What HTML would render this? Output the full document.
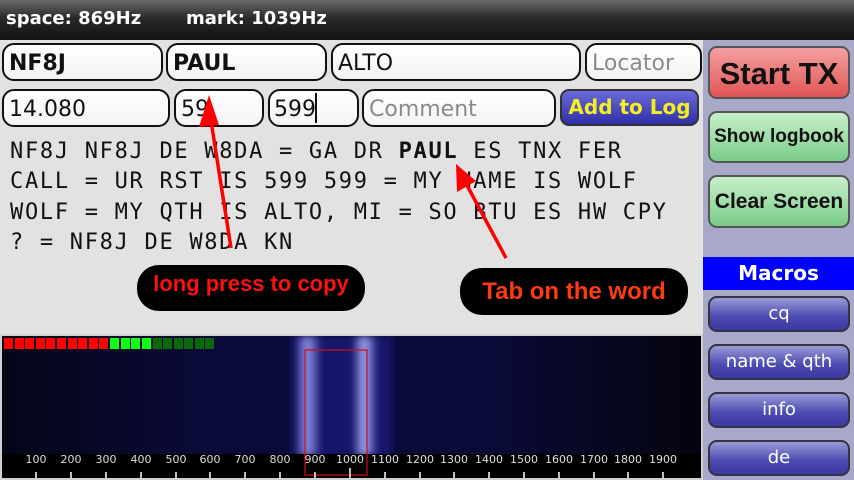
<!DOCTYPE html>
<html><head><meta charset="utf-8"><style>
*{margin:0;padding:0;box-sizing:border-box}
body{width:854px;height:480px;overflow:hidden;background:#e2e2e2;font-family:"DejaVu Sans","Liberation Sans",sans-serif;position:relative}
.abs{position:absolute}
.bar{left:0;top:0;width:854px;height:40px;background:linear-gradient(#6a6a6a,#2a2a2a 45%,#111)}
.bar span{position:absolute;top:8px;color:#fff;font-weight:bold;font-size:18px}
.fld{position:absolute;background:linear-gradient(#fff,#f4f4f4);border:2px solid #111;border-radius:12px;font-size:22px;padding-left:5px;line-height:37px;color:#111}
.gray{color:#8a8a8a}
.side{left:703px;top:40px;width:151px;height:440px;background:#a8a8c8}
.btn{position:absolute;left:708px;width:142px;border:2px solid #555;border-radius:9px;text-align:center;font-weight:bold;color:#111;white-space:nowrap;font-family:"Liberation Sans",sans-serif}
.mac{position:absolute;left:708px;width:142px;height:36px;border:2px solid #334;border-radius:9px;background:linear-gradient(#9a9ad8,#4a4ab0 60%,#3a3aa0);color:#fff;text-align:center;font-size:18px;line-height:31px}
.txt{position:absolute;left:10px;font-family:"DejaVu Sans Mono","Liberation Mono",monospace;font-size:22px;color:#111;white-space:pre;letter-spacing:1.7px}
.bub{position:absolute;background:#000;border-radius:22px;font-family:"Liberation Sans",sans-serif;font-weight:bold;text-align:center;white-space:nowrap}
</style></head><body>
<div class="abs bar"><span style="left:6px">space: 869Hz</span><span style="left:186px">mark: 1039Hz</span></div>
<div class="abs side"></div>
<div class="fld" style="left:2px;top:43px;width:161px;height:38px;font-weight:bold">NF8J</div>
<div class="fld" style="left:166px;top:43px;width:161px;height:38px;font-weight:bold">PAUL</div>
<div class="fld" style="left:331px;top:43px;width:250px;height:38px">ALTO</div>
<div class="fld gray" style="left:585px;top:43px;width:117px;height:38px">Locator</div>
<div class="fld" style="left:2px;top:89px;width:168px;height:38px">14.080</div>
<div class="fld" style="left:174px;top:89px;width:90px;height:38px">59</div>
<div class="fld" style="left:268px;top:89px;width:91px;height:38px;padding-left:4px">599<span style="position:absolute;left:45px;top:2px;width:2px;height:30px;background:#111"></span></div>
<div class="fld gray" style="left:362px;top:89px;width:194px;height:38px">Comment</div>
<div class="abs" style="left:560px;top:89px;width:139px;height:37px;border:2px solid #333;border-radius:9px;background:linear-gradient(#6a6ad8,#3030a8);color:#f4f020;font-weight:bold;font-size:20px;text-align:center;line-height:33px">Add to Log</div>

<div class="txt" style="top:139px">NF8J NF8J DE W8DA = GA DR <b>PAUL</b> ES TNX FER</div>
<div class="txt" style="top:169px">CALL = UR RST IS 599 599 = MY NAME IS WOLF</div>
<div class="txt" style="top:200px">WOLF = MY QTH IS ALTO, MI = SO BTU ES HW CPY</div>
<div class="txt" style="top:230px">? = NF8J DE W8DA KN</div>

<div class="bub" style="left:137px;top:265px;width:228px;height:46px;font-size:22px;line-height:38px;color:#ff1010">long press to copy</div>
<div class="bub" style="left:460px;top:268px;width:228px;height:47px;font-size:24px;line-height:47px;color:#ff3a10">Tab on the word</div>

<div class="abs" style="left:0;top:334px;width:703px;height:146px;background:#d0d0d0"></div>
<svg class="abs" style="left:2px;top:336px" width="699" height="142">
<defs><linearGradient id="w" x1="0" x2="1"><stop offset="0" stop-color="#050518"/><stop offset=".3" stop-color="#0a0a3a"/><stop offset=".7" stop-color="#0a0a38"/><stop offset="1" stop-color="#04040e"/></linearGradient>
<filter id="b"><feGaussianBlur stdDeviation="4"/></filter></defs>
<rect width="699" height="142" fill="url(#w)"/>
<g filter="url(#b)">
<rect x="290" y="0" width="100" height="120" fill="#16166a"/>
<rect x="297" y="0" width="18" height="120" fill="#5a5ac8" opacity=".8"/>
<rect x="302" y="0" width="7" height="120" fill="#a8a8f0" opacity=".7"/>
<rect x="354" y="0" width="18" height="120" fill="#5a5ac8" opacity=".8"/>
<rect x="359" y="0" width="7" height="120" fill="#b8b8f8" opacity=".8"/>
</g>
<rect x="0" y="118" width="699" height="24" fill="#000"/>
<g fill="#f00"><rect x="2" y="2" width="9" height="11"/><rect x="13" y="2" width="9" height="11"/><rect x="23" y="2" width="9" height="11"/><rect x="34" y="2" width="9" height="11"/><rect x="44" y="2" width="9" height="11"/><rect x="55" y="2" width="9" height="11"/><rect x="66" y="2" width="9" height="11"/><rect x="76" y="2" width="9" height="11"/><rect x="87" y="2" width="9" height="11"/><rect x="97" y="2" width="9" height="11"/></g>
<g fill="#1f1"><rect x="108" y="2" width="9" height="11"/><rect x="119" y="2" width="9" height="11"/><rect x="129" y="2" width="9" height="11"/><rect x="140" y="2" width="9" height="11"/></g>
<g fill="#0a6a0a"><rect x="151" y="2" width="9" height="11"/><rect x="161" y="2" width="9" height="11"/><rect x="172" y="2" width="9" height="11"/><rect x="182" y="2" width="9" height="11"/><rect x="193" y="2" width="9" height="11"/><rect x="203" y="2" width="9" height="11"/></g>
<rect x="303" y="14" width="62" height="125" fill="none" stroke="#d01010" stroke-width="1.2"/>
<g fill="#ddd" font-family="DejaVu Sans,sans-serif" font-size="11" text-anchor="middle">
<text x="34" y="127">100</text><text x="69" y="127">200</text><text x="104" y="127">300</text><text x="139" y="127">400</text><text x="174" y="127">500</text><text x="208" y="127">600</text><text x="243" y="127">700</text><text x="278" y="127">800</text><text x="313" y="127">900</text><text x="348" y="127">1000</text><text x="383" y="127">1100</text><text x="418" y="127">1200</text><text x="452" y="127">1300</text><text x="487" y="127">1400</text><text x="522" y="127">1500</text><text x="557" y="127">1600</text><text x="592" y="127">1700</text><text x="626" y="127">1800</text><text x="661" y="127">1900</text></g>
<g stroke="#fff" stroke-width="1.5"><line x1="34" y1="136" x2="34" y2="142"/><line x1="69" y1="136" x2="69" y2="142"/><line x1="104" y1="136" x2="104" y2="142"/><line x1="139" y1="136" x2="139" y2="142"/><line x1="174" y1="136" x2="174" y2="142"/><line x1="208" y1="136" x2="208" y2="142"/><line x1="243" y1="136" x2="243" y2="142"/><line x1="278" y1="136" x2="278" y2="142"/><line x1="313" y1="136" x2="313" y2="142"/><line x1="348" y1="132" x2="348" y2="142"/><line x1="383" y1="136" x2="383" y2="142"/><line x1="418" y1="136" x2="418" y2="142"/><line x1="452" y1="136" x2="452" y2="142"/><line x1="487" y1="136" x2="487" y2="142"/><line x1="522" y1="136" x2="522" y2="142"/><line x1="557" y1="136" x2="557" y2="142"/><line x1="592" y1="136" x2="592" y2="142"/><line x1="626" y1="136" x2="626" y2="142"/><line x1="661" y1="136" x2="661" y2="142"/></g>
</svg>

<svg class="abs" style="left:0;top:0" width="703" height="334">
<line x1="231" y1="248" x2="209" y2="108" stroke="#f00" stroke-width="3.5"/>
<polygon points="209,95 199,127 219,125" fill="#f00"/>
<line x1="506" y1="258" x2="462" y2="176" stroke="#f00" stroke-width="3.5"/>
<polygon points="456,164 457,192 476,181" fill="#f00"/>
</svg>

<div class="btn" style="top:46px;height:53px;background:linear-gradient(#f4a0a0,#e05555);font-size:31px;line-height:51px">Start TX</div>
<div class="btn" style="top:111px;height:52px;background:linear-gradient(#c8f0c8,#7acc8a);font-size:19px;line-height:48px">Show logbook</div>
<div class="btn" style="top:175px;height:53px;background:linear-gradient(#c8f0c8,#7acc8a);font-size:21px;line-height:49px">Clear Screen</div>
<div class="abs" style="left:703px;top:257px;width:151px;height:33px;background:#0000ff;color:#fff;font-weight:bold;font-size:20px;text-align:center;line-height:33px">Macros</div>
<div class="mac" style="top:296px">cq</div>
<div class="mac" style="top:344px">name &amp; qth</div>
<div class="mac" style="top:392px">info</div>
<div class="mac" style="top:440px">de</div>
</body></html>
